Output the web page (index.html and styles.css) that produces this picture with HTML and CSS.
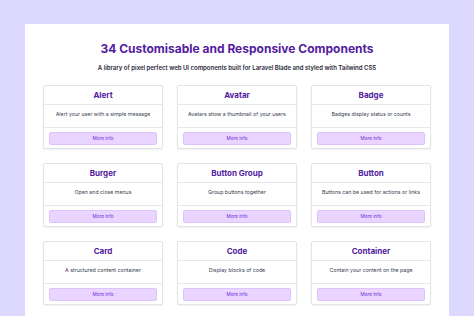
FILE: index.html
```html
<!DOCTYPE html>
<html>
<head>
<meta charset="utf-8">
<link rel="stylesheet" href="styles.css">
</head>
<body>
<div class="panel">
  <h1 class="title">34 Customisable and Responsive Components</h1>
  <p class="subtitle">A library of pixel perfect web UI components built for Laravel Blade and styled with Tailwind CSS</p>
  <div class="grid">
    <div class="card"><div class="card-head">Alert</div><div class="card-body">Alert your user with a simple message</div><div class="card-foot"><span class="btn">More info</span></div></div>
    <div class="card"><div class="card-head">Avatar</div><div class="card-body">Avatars show a thumbnail of your users</div><div class="card-foot"><span class="btn">More info</span></div></div>
    <div class="card"><div class="card-head">Badge</div><div class="card-body">Badges display status or counts</div><div class="card-foot"><span class="btn">More info</span></div></div>
    <div class="card"><div class="card-head">Burger</div><div class="card-body">Open and close menus</div><div class="card-foot"><span class="btn">More info</span></div></div>
    <div class="card"><div class="card-head">Button Group</div><div class="card-body">Group buttons together</div><div class="card-foot"><span class="btn">More info</span></div></div>
    <div class="card"><div class="card-head">Button</div><div class="card-body">Buttons can be used for actions or links</div><div class="card-foot"><span class="btn">More info</span></div></div>
    <div class="card"><div class="card-head">Card</div><div class="card-body">A structured content container</div><div class="card-foot"><span class="btn">More info</span></div></div>
    <div class="card"><div class="card-head">Code</div><div class="card-body">Display blocks of code</div><div class="card-foot"><span class="btn">More info</span></div></div>
    <div class="card"><div class="card-head">Container</div><div class="card-body">Contain your content on the page</div><div class="card-foot"><span class="btn">More info</span></div></div>
  </div>
</div>
</body>
</html>
```
FILE: styles.css
```css
html {
  margin: 0;
  padding: 0;
  background:
    linear-gradient(#ddd8fd, #ddd8fd) top left / 100% 24px no-repeat,
    linear-gradient(to right, #ddd8fd 25px, #ffffff 25px, #ffffff 449px, #ddd8fd 449px);
  overflow: hidden;
}
body {
  margin: 0;
  padding: 0;
  font-family: Inter, "Noto Sans", sans-serif;
}
.panel {
  margin: 24px 25px 0 25px;
  background: #ffffff;
  height: 292px;
  padding: 17px 0 0 0;
  box-sizing: border-box;
  display: flex;
  flex-direction: column;
  align-items: center;
}
.title {
  margin: 0;
  font-size: 12px;
  line-height: 16px;
  font-weight: 700;
  color: #52209f;
}
.subtitle {
  margin: 6px 0 0 0;
  font-size: 6px;
  line-height: 9px;
  font-weight: 600;
  color: #1f2937;
}
.grid {
  margin-top: 13px;
  display: grid;
  grid-template-columns: repeat(3, 120px);
  column-gap: 14px;
  row-gap: 14px;
}
.card {
  height: 64px;
  box-sizing: border-box;
  border: 1px solid #e2e4ea;
  border-radius: 2px;
  box-shadow: 0 1px 2px rgba(0,0,0,0.06);
  display: flex;
  flex-direction: column;
  background: #fff;
}
.card-head {
  height: 19px;
  box-sizing: border-box;
  border-bottom: 1px solid #e7e8ee;
  display: flex;
  align-items: center;
  justify-content: center;
  font-size: 8px;
  font-weight: 700;
  color: #52209f;
}
.card-body {
  height: 23px;
  box-sizing: border-box;
  border-bottom: 1px solid #e7e8ee;
  display: flex;
  align-items: center;
  justify-content: center;
  font-size: 5.25px;
  color: #374151;
  padding-bottom: 5px;
}
.card-foot {
  flex: 1;
  display: flex;
  align-items: center;
  padding: 0 5px;
}
.btn {
  flex: 1;
  height: 13px;
  box-sizing: border-box;
  background: #e9d5ff;
  border: 1px solid #dcc4fb;
  border-radius: 2px;
  display: flex;
  align-items: center;
  justify-content: center;
  font-size: 4.7px;
  color: #6d28d9;
}
```
